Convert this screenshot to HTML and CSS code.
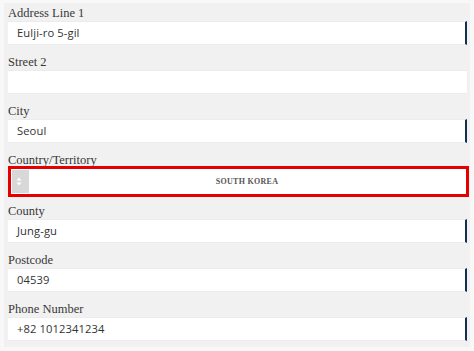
FILE: index.html
```html
<!DOCTYPE html>
<html>
<head>
<meta charset="utf-8">
<link rel="stylesheet" href="styles.css">
</head>
<body>
<div class="panel">
  <div class="field">
    <label class="label">Address Line 1</label>
    <div class="input filled">Eulji-ro 5-gil</div>
  </div>
  <div class="field">
    <label class="label">Street 2</label>
    <div class="input"></div>
  </div>
  <div class="field">
    <label class="label">City</label>
    <div class="input filled">Seoul</div>
  </div>
  <div class="field field-select">
    <label class="label">Country/Territory</label>
    <div class="select">
      <span class="select-arrows">
        <svg width="6" height="9" viewBox="0 0 6 9"><path d="M3 0.5 L5.5 3.5 H0.5 Z M3 8.5 L5.5 5.5 H0.5 Z" fill="#fff"/></svg>
      </span>
      <span class="select-value">SOUTH KOREA</span>
    </div>
  </div>
  <div class="field">
    <label class="label">County</label>
    <div class="input filled">Jung-gu</div>
  </div>
  <div class="field">
    <label class="label">Postcode</label>
    <div class="input filled">04539</div>
  </div>
  <div class="field">
    <label class="label">Phone Number</label>
    <div class="input filled">+82 1012341234</div>
  </div>
</div>
</body>
</html>
```

FILE: styles.css
```css
html, body {
  margin: 0;
  padding: 0;
  background: #f8f8f8;
}
body {
  width: 474px;
  height: 351px;
  overflow: hidden;
  padding: 3px 4px 4px 4px;
  box-sizing: border-box;
}
.panel {
  background: #f1f1f1;
  height: 344px;
  padding: 2px 3px 0 4px;
  box-sizing: border-box;
  display: flex;
  flex-direction: column;
}
.field {
  display: flex;
  flex-direction: column;
  margin-bottom: 9px;
}
.label {
  font-family: "Liberation Serif", serif;
  font-size: 12.5px;
  line-height: 16px;
  color: #383838;
}
.input {
  height: 24px;
  background: #fff;
  box-sizing: border-box;
  padding-left: 9px;
  font-family: "Open Sans", sans-serif;
  font-size: 11.2px;
  letter-spacing: 0.1px;
  line-height: 22px;
  color: #333;
  border-top: 1px solid #ececec;
  border-bottom: 1px solid #ececec;
}
.input.filled {
  border-right: 2px solid #12314f;
}
.field-select {
  margin-bottom: 6px;
}
.select {
  margin-top: -2px;
  margin-right: -2px;
  height: 31px;
  border: 3px solid #e30000;
  background: #fff;
  box-sizing: border-box;
  display: flex;
  align-items: stretch;
  padding: 1px 1px 1px 1px;
}
.select-arrows {
  width: 17px;
  background: #d8d8d8;
  display: flex;
  align-items: center;
  justify-content: center;
  padding-right: 3px;
  box-sizing: border-box;
}
.select-value {
  flex: 1;
  text-align: center;
  font-family: "Liberation Serif", serif;
  font-weight: bold;
  font-size: 8px;
  letter-spacing: 0.3px;
  color: #555;
  line-height: 23px;
}
```
